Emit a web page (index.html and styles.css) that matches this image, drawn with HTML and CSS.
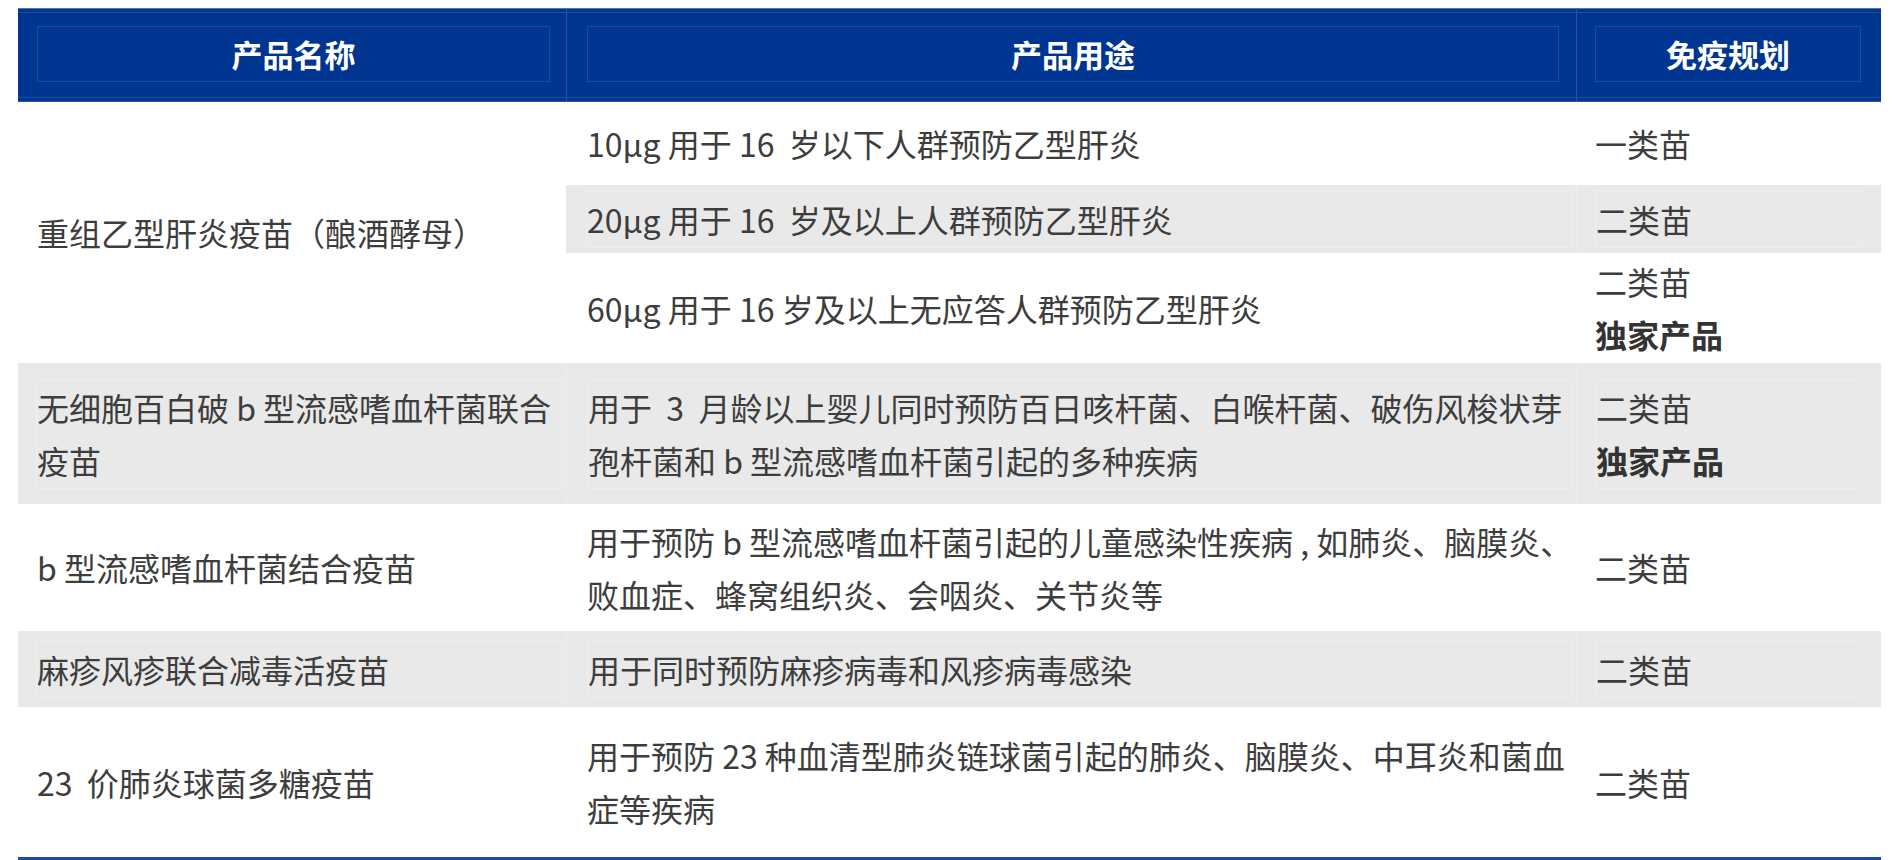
FILE: index.html
```html
<!DOCTYPE html>
<html lang="zh-CN">
<head>
<meta charset="utf-8">
<title>产品列表</title>
<link rel="stylesheet" href="styles.css">
</head>
<body>
<div class="page">
<table class="vt">
  <colgroup><col class="c1"><col class="c2"><col class="c3"></colgroup>
  <thead>
    <tr>
      <th class="h1"><div class="frame"><div class="in">产品名称</div></div></th>
      <th class="h2"><div class="frame"><div class="in">产品用途</div></div></th>
      <th class="h3"><div class="frame"><div class="in">免疫规划</div></div></th>
    </tr>
  </thead>
  <tbody>
    <tr class="r1a">
      <td rowspan="3" class="k1"><div class="in">重组乙型肝炎疫苗（酿酒酵母）</div></td>
      <td class="k2"><div class="in">10μg 用于 16&nbsp; 岁以下人群预防乙型肝炎</div></td>
      <td class="k3"><div class="in">一类苗</div></td>
    </tr>
    <tr class="r1b alt">
      <td class="k2"><div class="in">20μg 用于 16&nbsp; 岁及以上人群预防乙型肝炎</div></td>
      <td class="k3"><div class="in">二类苗</div></td>
    </tr>
    <tr class="r1c">
      <td class="k2"><div class="in">60μg 用于 16 岁及以上无应答人群预防乙型肝炎</div></td>
      <td class="k3"><div class="in">二类苗<br><b>独家产品</b></div></td>
    </tr>
    <tr class="r2 alt">
      <td class="k1"><div class="in">无细胞百白破 b 型流感嗜血杆菌联合<br>疫苗</div></td>
      <td class="k2"><div class="in">用于&nbsp; 3&nbsp; 月龄以上婴儿同时预防百日咳杆菌、白喉杆菌、破伤风梭状芽<br>孢杆菌和 b 型流感嗜血杆菌引起的多种疾病</div></td>
      <td class="k3"><div class="in">二类苗<br><b>独家产品</b></div></td>
    </tr>
    <tr class="r3">
      <td class="k1"><div class="in">b 型流感嗜血杆菌结合疫苗</div></td>
      <td class="k2"><div class="in">用于预防 b 型流感嗜血杆菌引起的儿童感染性疾病 , 如肺炎、脑膜炎、<br>败血症、蜂窝组织炎、会咽炎、关节炎等</div></td>
      <td class="k3"><div class="in">二类苗</div></td>
    </tr>
    <tr class="r4 alt">
      <td class="k1"><div class="in">麻疹风疹联合减毒活疫苗</div></td>
      <td class="k2"><div class="in">用于同时预防麻疹病毒和风疹病毒感染</div></td>
      <td class="k3"><div class="in">二类苗</div></td>
    </tr>
    <tr class="r5 last">
      <td class="k1"><div class="in">23&nbsp; 价肺炎球菌多糖疫苗</div></td>
      <td class="k2"><div class="in">用于预防 23 种血清型肺炎链球菌引起的肺炎、脑膜炎、中耳炎和菌血<br>症等疾病</div></td>
      <td class="k3"><div class="in">二类苗</div></td>
    </tr>
  </tbody>
</table>
</div>
</body>
</html>
```
FILE: styles.css
```css
html, body {
  margin: 0;
  padding: 0;
  background: #ffffff;
}

.page {
  padding: 8px 13px 0 18px;
  font-family: "Noto Sans CJK SC", "Noto Sans", sans-serif;
  color: #3d3d3d;
}

.vt {
  width: 1863px;
  table-layout: fixed;
  border-collapse: separate;
  border-spacing: 0;
  font-size: 32px;
}

.c1 { width: 548px; }
.c2 { width: 1010px; }
.c3 { width: 305px; }

/* header */
.vt th {
  height: 94px;
  box-sizing: border-box;
  padding: 3px 0 3px 0;
  background: #003591;
  color: #ffffff;
  font-weight: 700;
  font-size: 31px;
  text-align: center;
  vertical-align: middle;
  border-top: 1px solid #5474b4;
  border-bottom: 1px solid #2a56a6;
}

.vt th + th {
  border-left: 1px solid #2a53a0;
}

.vt th .frame {
  border-top: 1px solid #1d4a9c;
  border-bottom: 1px solid #1d4a9c;
  padding: 13px 16px 15px 19px;
}

.vt th.h2 .frame { padding-left: 20px; padding-right: 17px; }
.vt th.h3 .frame { padding-left: 18px; padding-right: 20px; }

.vt th .in {
  height: 54px;
  line-height: 54px;
  border: 1px solid #1d4a9c;
}

/* body */
.vt td {
  padding: 0;
  vertical-align: middle;
  white-space: nowrap;
  line-height: 53px;
  background: #ffffff;
}

.vt td .in {
  margin: 0 16px 0 19px;
  padding: 1px 0;
  border: 1px solid transparent;
}

.vt td.k1 .in { margin-left: 18px; margin-right: 2px; }
.vt td.k2 .in { margin-left: 20px; margin-right: 4px; }
.vt td.k3 .in { margin-left: 18px; margin-right: 19px; }

.vt tr.alt td {
  background: #e9e9e9;
}

.vt tr.alt td .in {
  border-color: #eeeeee;
}

.vt tr.alt td + td {
  border-left: 1px solid #eeeeee;
}

.vt b {
  font-weight: 700;
  color: #333333;
}

.r1a { height: 83px; }
.r1b { height: 68px; }
.r1c { height: 110px; }
.r2 { height: 141px; }
.r3 { height: 127px; }
.r4 { height: 76px; }
.r5 { height: 153px; }

.vt tr.last td {
  border-bottom: 3px solid #1f4c9f;
}
```
